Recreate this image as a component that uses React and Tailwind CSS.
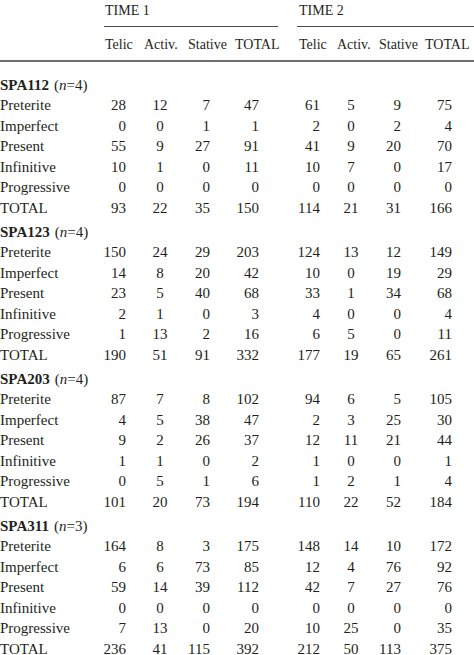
import React from "react";

const sections = [
  {
    name: "SPA112",
    n: "4",
    rows: [
      ["Preterite", 28, 12, 7, 47, 61, 5, 9, 75],
      ["Imperfect", 0, 0, 1, 1, 2, 0, 2, 4],
      ["Present", 55, 9, 27, 91, 41, 9, 20, 70],
      ["Infinitive", 10, 1, 0, 11, 10, 7, 0, 17],
      ["Progressive", 0, 0, 0, 0, 0, 0, 0, 0],
      ["TOTAL", 93, 22, 35, 150, 114, 21, 31, 166],
    ],
  },
  {
    name: "SPA123",
    n: "4",
    rows: [
      ["Preterite", 150, 24, 29, 203, 124, 13, 12, 149],
      ["Imperfect", 14, 8, 20, 42, 10, 0, 19, 29],
      ["Present", 23, 5, 40, 68, 33, 1, 34, 68],
      ["Infinitive", 2, 1, 0, 3, 4, 0, 0, 4],
      ["Progressive", 1, 13, 2, 16, 6, 5, 0, 11],
      ["TOTAL", 190, 51, 91, 332, 177, 19, 65, 261],
    ],
  },
  {
    name: "SPA203",
    n: "4",
    rows: [
      ["Preterite", 87, 7, 8, 102, 94, 6, 5, 105],
      ["Imperfect", 4, 5, 38, 47, 2, 3, 25, 30],
      ["Present", 9, 2, 26, 37, 12, 11, 21, 44],
      ["Infinitive", 1, 1, 0, 2, 1, 0, 0, 1],
      ["Progressive", 0, 5, 1, 6, 1, 2, 1, 4],
      ["TOTAL", 101, 20, 73, 194, 110, 22, 52, 184],
    ],
  },
  {
    name: "SPA311",
    n: "3",
    rows: [
      ["Preterite", 164, 8, 3, 175, 148, 14, 10, 172],
      ["Imperfect", 6, 6, 73, 85, 12, 4, 76, 92],
      ["Present", 59, 14, 39, 112, 42, 7, 27, 76],
      ["Infinitive", 0, 0, 0, 0, 0, 0, 0, 0],
      ["Progressive", 7, 13, 0, 20, 10, 25, 0, 35],
      ["TOTAL", 236, 41, 115, 392, 212, 50, 113, 375],
    ],
  },
];

const cellClasses = [
  "w-[30px] shrink-0 text-right",
  "ml-[14px] w-[40px] shrink-0 text-center",
  "w-[30px] shrink-0 text-right",
  "ml-[19px] w-[30px] shrink-0 text-right",
  "ml-[31px] w-[30px] shrink-0 text-right",
  "ml-[11px] w-[40px] shrink-0 text-center",
  "w-[30px] shrink-0 text-right",
  "ml-[21px] w-[30px] shrink-0 text-right",
];

function DataRow({ row, idx }) {
  const [label, ...vals] = row;
  return (
    <div
      className={
        idx % 2 === 0
          ? "flex h-[21px] items-center leading-none whitespace-nowrap"
          : "flex h-[20px] items-center leading-none whitespace-nowrap"
      }
    >
      <div className="w-[96px] shrink-0">{label}</div>
      {vals.map((v, i) => (
        <div key={i} className={cellClasses[i]}>
          {v}
        </div>
      ))}
    </div>
  );
}

export default function App() {
  return (
    <div className="w-[474px] h-[655px] overflow-hidden bg-white text-[#231f20] font-['Liberation_Serif','Times_New_Roman',serif]">
      {/* Header row 1 */}
      <div className="flex text-[14px]">
        <div className="ml-[104px] w-[174px] shrink-0 border-b border-[#4a4a4a]">
          <div className="h-[26px] pl-[1px] pt-[1px] leading-[20px]">TIME 1</div>
        </div>
        <div className="ml-[19px] flex-1 border-b border-[#4a4a4a]">
          <div className="h-[26px] pl-[2px] pt-[1px] leading-[20px]">TIME 2</div>
        </div>
      </div>
      {/* Header row 2 */}
      <div className="flex h-[35px] items-center pt-[3px] pl-[105px] text-[14px] leading-none whitespace-nowrap border-b-2 border-[#6e6e6e]">
        <div className="w-[39px] shrink-0">Telic</div>
        <div className="w-[44px] shrink-0">Activ.</div>
        <div className="w-[47px] shrink-0">Stative</div>
        <div className="w-[64px] shrink-0">TOTAL</div>
        <div className="w-[38px] shrink-0">Telic</div>
        <div className="w-[42px] shrink-0">Activ.</div>
        <div className="w-[46px] shrink-0">Stative</div>
        <div className="shrink-0">TOTAL</div>
      </div>
      {/* Body */}
      <div className="pt-[9px] text-[15px]">
        {sections.map((s, si) => (
          <div key={s.name} className={si === 0 ? "pt-[5px]" : "pt-[5px]"}>
            <div className="flex h-[19px] items-center leading-none whitespace-nowrap">
              <span className="font-bold">{s.name}</span>
              <span className="ml-[5px]">
                (<span className="italic">n</span>={s.n})
              </span>
            </div>
            {s.rows.map((r, i) => (
              <DataRow key={r[0]} row={r} idx={i} />
            ))}
          </div>
        ))}
      </div>
    </div>
  );
}
